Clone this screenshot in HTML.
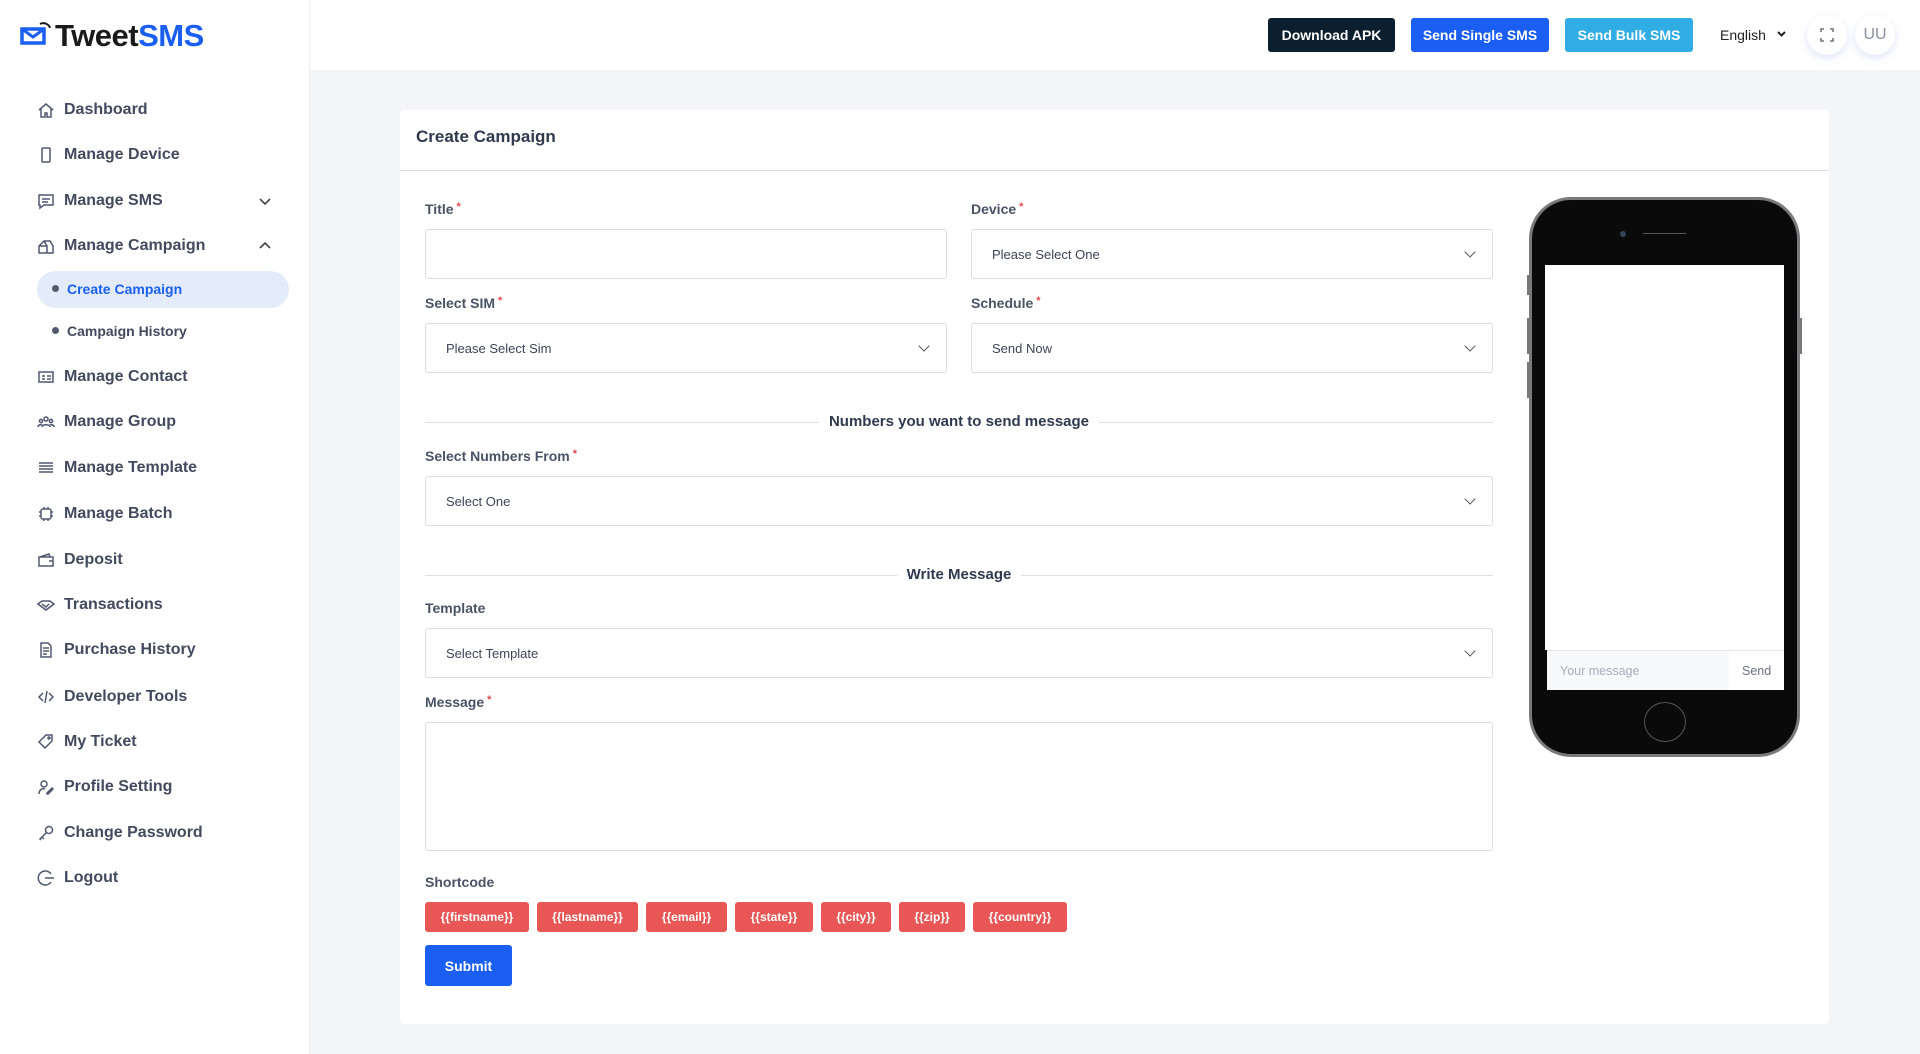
<!DOCTYPE html>
<html><head><meta charset="utf-8"><style>
*{box-sizing:border-box;margin:0;padding:0}
body{width:1920px;height:1054px;overflow:hidden;background:#f3f5f9;font-family:"Liberation Sans",sans-serif;color:#2f3a4f;position:relative}
.side{position:absolute;left:0;top:0;width:310px;height:1054px;background:#fff;border-right:1px solid #eceef3}
.top{position:absolute;left:310px;top:0;right:0;height:70px;background:#fff}
.logo{position:absolute;left:20px;top:18px;font-size:31px;font-weight:bold;letter-spacing:-0.5px;color:#1a1a1a}
.logo span{color:#1a5ff2}
.nav{position:absolute;left:37px;font-size:16px;font-weight:bold;color:#434a5e;display:flex;align-items:center}
.nav svg{width:18px;height:18px;margin-right:9px;stroke:#505870;fill:none;stroke-width:1.5}
.chev{position:absolute;left:258px;width:14px;height:14px}
.pill{position:absolute;left:37px;top:271px;width:252px;height:37px;border-radius:19px;background:#e4ecfb}
.sub{position:absolute;left:52px;font-size:14px;font-weight:bold;color:#434a5e}
.sub:before{content:"";display:inline-block;width:7px;height:7px;border-radius:50%;background:#535a6e;margin-right:8px;vertical-align:middle;position:relative;top:-2px}
.btn{position:absolute;top:18px;height:34px;border-radius:3px;color:#fff;font-size:14px;font-weight:bold;display:flex;align-items:center;justify-content:center}
.circ{position:absolute;top:15px;width:40px;height:40px;border-radius:50%;background:#fff;box-shadow:0 3px 8px rgba(80,110,220,.18);display:flex;align-items:center;justify-content:center;color:#8a90a0;font-size:16px}
.card{position:absolute;left:400px;top:110px;width:1429px;height:914px;background:#fff;border-radius:4px}
.ch{position:absolute;left:16px;top:17px;font-size:17px;font-weight:bold;color:#2f3a4f}
.hr{position:absolute;left:0;right:0;top:60px;height:1px;background:#dcdfe5}
.lbl{position:absolute;font-size:14px;font-weight:bold;color:#4a5266}
.lbl i{color:#e5484d;font-style:normal;font-size:11px;vertical-align:top;margin-left:3px}
.in{position:absolute;height:50px;border:1px solid #dadde3;border-radius:3px;font-size:13px;color:#3d4456;padding-left:20px;display:flex;align-items:center}
.in.s:after{content:"";position:absolute;right:18px;top:18px;width:7px;height:7px;border-right:1.4px solid #555;border-bottom:1.4px solid #555;transform:rotate(45deg)}
.dv{position:absolute;left:25px;width:1068px;height:1px;background:#dcdfe5}
.dvt{position:absolute;left:25px;width:1068px;text-align:center;font-size:15px;font-weight:bold;color:#2f3a4f}
.dvt span{background:#fff;padding:0 10px}
.sc{position:absolute;top:792px;height:30px;background:#e85656;border-radius:3px;color:#fff;font-size:12px;font-weight:bold;display:flex;align-items:center;justify-content:center}
</style></head><body>
<div class="side">
<div class="logo"><svg width="32" height="30" viewBox="0 0 32 30" style="vertical-align:-4px;margin-right:3px"><path d="M2 9h22v14H2z" fill="none" stroke="#1a5ff2" stroke-width="3.5"/><path d="M2 9l11 8 11-8" fill="none" stroke="#1a5ff2" stroke-width="3"/><path d="M20 4c4-2 9 0 10 4" fill="none" stroke="#1a1a1a" stroke-width="2"/></svg>Tweet<span>SMS</span></div>
<div class="nav" style="top:101px"><svg viewBox="0 0 18 18"><path d="M2 9l7-6 7 6M4 8v8h4v-4h2v4h4V8"/></svg>Dashboard</div>
<div class="nav" style="top:146px"><svg viewBox="0 0 18 18"><rect x="5" y="2" width="8" height="14" rx="1"/></svg>Manage Device</div>
<div class="nav" style="top:192px"><svg viewBox="0 0 18 18"><path d="M2 3h14v10H7l-4 3v-3H2z M5 7h8M5 10h6"/></svg>Manage SMS</div>
<svg class="chev" style="top:194px" viewBox="0 0 14 14"><path d="M2 5l5 5 5-5" fill="none" stroke="#444" stroke-width="1.6"/></svg>
<div class="nav" style="top:237px"><svg viewBox="0 0 18 18"><path d="M2 9l5-5h6l3 5v7H2z M7 4l3 5v7M2 9h8"/></svg>Manage Campaign</div>
<svg class="chev" style="top:239px" viewBox="0 0 14 14"><path d="M2 9l5-5 5 5" fill="none" stroke="#444" stroke-width="1.6"/></svg>
<div class="pill"></div>
<div class="sub" style="top:281px;color:#1a5ff2">Create Campaign</div>
<div class="sub" style="top:323px">Campaign History</div>
<div class="nav" style="top:368px"><svg viewBox="0 0 18 18"><rect x="2" y="4" width="14" height="10"/><path d="M5 8h3M5 11h3M10 8h4M10 11h4"/></svg>Manage Contact</div>
<div class="nav" style="top:413px"><svg viewBox="0 0 18 18"><circle cx="9" cy="6" r="2"/><circle cx="4" cy="8" r="1.6"/><circle cx="14" cy="8" r="1.6"/><path d="M5 14c0-3 8-3 8 0M1 14c0-2 3-3 4-2M17 14c0-2-3-3-4-2"/></svg>Manage Group</div>
<div class="nav" style="top:459px"><svg viewBox="0 0 18 18"><path d="M2 4h14M2 7h14M2 10h14M2 13h14"/></svg>Manage Template</div>
<div class="nav" style="top:505px"><svg viewBox="0 0 18 18"><rect x="4" y="4" width="10" height="10" rx="2"/><path d="M7 2v2M11 2v2M7 14v2M11 14v2M2 7h2M2 11h2M14 7h2M14 11h2"/></svg>Manage Batch</div>
<div class="nav" style="top:551px"><svg viewBox="0 0 18 18"><path d="M2 6h14v9H2zM3 6l9-3 1 3M12 10h4"/></svg>Deposit</div>
<div class="nav" style="top:596px"><svg viewBox="0 0 18 18"><path d="M1 8l4-3h8l4 3-8 6z M5 8l4 3 3-3"/></svg>Transactions</div>
<div class="nav" style="top:641px"><svg viewBox="0 0 18 18"><path d="M4 2h7l3 3v11H4z M6 7h6M6 10h6M6 13h4"/></svg>Purchase History</div>
<div class="nav" style="top:688px"><svg viewBox="0 0 18 18"><path d="M6 5l-4 4 4 4M12 5l4 4-4 4M10 3l-2 12"/></svg>Developer Tools</div>
<div class="nav" style="top:733px"><svg viewBox="0 0 18 18"><path d="M9 2h6v6l-7 7-6-6z"/><circle cx="12" cy="5" r="1"/></svg>My Ticket</div>
<div class="nav" style="top:778px"><svg viewBox="0 0 18 18"><circle cx="7" cy="6" r="3"/><path d="M2 16c0-4 3-6 6-5M10 15l5-5 1 1-5 5h-1z"/></svg>Profile Setting</div>
<div class="nav" style="top:824px"><svg viewBox="0 0 18 18"><circle cx="12" cy="6" r="3.5"/><path d="M10 8l-7 7 1 1M5 13l2 2"/></svg>Change Password</div>
<div class="nav" style="top:869px"><svg viewBox="0 0 18 18"><path d="M14 5a7 7 0 1 0 0 8M8 9h9"/></svg>Logout</div>
</div>
<div class="top">
<div class="btn" style="left:958px;width:127px;background:#0b1f2f">Download APK</div>
<div class="btn" style="left:1101px;width:138px;background:#1a5ff2">Send Single SMS</div>
<div class="btn" style="left:1255px;width:128px;background:#31ade6">Send Bulk SMS</div>
<div style="position:absolute;left:1410px;top:27px;font-size:14px;color:#222">English <svg width="11" height="11" viewBox="0 0 11 11" style="margin-left:6px;vertical-align:0"><path d="M2 3l3.5 3.5L9 3" fill="none" stroke="#222" stroke-width="2"/></svg></div>
<div class="circ" style="left:1497px"><svg width="14" height="14" viewBox="0 0 14 14" fill="none" stroke="#777" stroke-width="1.6"><path d="M1 4V1h3M10 1h3v3M13 10v3h-3M4 13H1v-3"/></svg></div>
<div class="circ" style="left:1545px">UU</div>
</div>
<div class="card">
<div class="ch">Create Campaign</div><div class="hr"></div>
<div class="lbl" style="left:25px;top:91px">Title<i>*</i></div>
<div class="in" style="left:25px;top:119px;width:522px"></div>
<div class="lbl" style="left:571px;top:91px">Device<i>*</i></div>
<div class="in s" style="left:571px;top:119px;width:522px">Please Select One</div>
<div class="lbl" style="left:25px;top:185px">Select SIM<i>*</i></div>
<div class="in s" style="left:25px;top:213px;width:522px">Please Select Sim</div>
<div class="lbl" style="left:571px;top:185px">Schedule<i>*</i></div>
<div class="in s" style="left:571px;top:213px;width:522px">Send Now</div>
<div class="dv" style="top:312px"></div><div class="dvt" style="top:303px"><span>Numbers you want to send message</span></div>
<div class="lbl" style="left:25px;top:338px">Select Numbers From<i>*</i></div>
<div class="in s" style="left:25px;top:366px;width:1068px">Select One</div>
<div class="dv" style="top:465px"></div><div class="dvt" style="top:456px"><span>Write Message</span></div>
<div class="lbl" style="left:25px;top:490px">Template</div>
<div class="in s" style="left:25px;top:518px;width:1068px">Select Template</div>
<div class="lbl" style="left:25px;top:584px">Message<i>*</i></div>
<div class="in" style="left:25px;top:612px;width:1068px;height:129px"></div>
<div class="lbl" style="left:25px;top:764px">Shortcode</div>
<div class="sc" style="left:25px;width:104px">{{firstname}}</div>
<div class="sc" style="left:137px;width:101px">{{lastname}}</div>
<div class="sc" style="left:246px;width:81px">{{email}}</div>
<div class="sc" style="left:335px;width:78px">{{state}}</div>
<div class="sc" style="left:421px;width:70px">{{city}}</div>
<div class="sc" style="left:499px;width:66px">{{zip}}</div>
<div class="sc" style="left:573px;width:94px">{{country}}</div>
<div class="btn" style="left:25px;top:835px;width:87px;height:41px;background:#1a5ff2;font-size:14px">Submit</div>
<!-- phone -->
<div style="position:absolute;left:1129px;top:87px;width:271px;height:560px;border-radius:42px;background:#0a0a0a;border:3px solid #7a7a7e"></div>
<div style="position:absolute;left:1127px;top:165px;width:3px;height:20px;background:#777"></div>
<div style="position:absolute;left:1127px;top:208px;width:3px;height:36px;background:#777"></div>
<div style="position:absolute;left:1127px;top:252px;width:3px;height:36px;background:#777"></div>
<div style="position:absolute;left:1399px;top:208px;width:3px;height:36px;background:#777"></div>
<div style="position:absolute;left:1220px;top:121px;width:6px;height:6px;border-radius:50%;background:#345"></div>
<div style="position:absolute;left:1243px;top:123px;width:43px;height:1px;background:#555"></div>
<div style="position:absolute;left:1145px;top:155px;width:239px;height:385px;background:#fff"></div>
<div style="position:absolute;left:1147px;top:540px;width:182px;height:40px;background:#f8f9fa;border-top:1px solid #e3e5e8;font-size:12.5px;color:#a6adbd;padding:13px 13px">Your message</div>
<div style="position:absolute;left:1329px;top:540px;width:55px;height:40px;background:#fff;border-top:1px solid #e3e5e8;font-size:12.5px;color:#6a7185;padding:13px 13px">Send</div>
<div style="position:absolute;left:1244px;top:592px;width:42px;height:40px;border-radius:50%;border:1.5px solid #555"></div>
</div>
</body></html>
